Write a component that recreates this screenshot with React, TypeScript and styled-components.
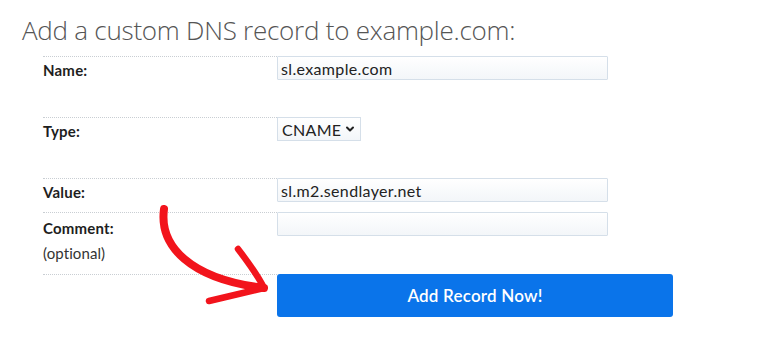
import React from 'react';
import styled, { createGlobalStyle } from 'styled-components';
import { ChevronDown } from 'lucide-react';

const GlobalStyle = createGlobalStyle`
  html, body {
    margin: 0;
    padding: 0;
    background: #fff;
  }
  body {
    font-family: Lato, "Open Sans", Arial, sans-serif;
    color: #222;
  }
`;

const Page = styled.div`
  position: relative;
  width: 768px;
  height: 342px;
  overflow: hidden;
  padding: 14px 0 0 22px;
  box-sizing: border-box;
`;

const Heading = styled.h1`
  margin: 0;
  font-family: "Open Sans", sans-serif;
  font-weight: 300;
  font-size: 26px;
  line-height: 32px;
  letter-spacing: -0.25px;
  color: #555;
`;

const Form = styled.div`
  margin: 10px 0 0 21px;
  display: flex;
  flex-direction: column;
`;

const Row = styled.div<{ $h: number }>`
  display: grid;
  grid-template-columns: 234px auto;
  height: ${(p) => p.$h}px;
`;

const LabelCell = styled.div<{ $pad?: number }>`
  border-top: 1px dotted #c9ced3;
  padding-top: ${(p) => p.$pad ?? 5}px;
  display: flex;
  flex-direction: column;
  gap: 9px;
`;

const Label = styled.span`
  font-weight: 700;
  font-size: 15px;
  line-height: 16px;
  letter-spacing: 0.2px;
  color: #1e1e1e;
`;

const Hint = styled.span`
  font-size: 15px;
  line-height: 16px;
  letter-spacing: 0.1px;
  color: #333;
`;

const FieldCell = styled.div`
  display: flex;
  align-items: flex-start;
`;

const TextInput = styled.input`
  width: 331px;
  height: 24px;
  box-sizing: border-box;
  border: 1px solid #d5dfe9;
  border-radius: 1px;
  background: linear-gradient(#ffffff, #f3f6f9);
  font-family: Lato, sans-serif;
  font-size: 16px;
  letter-spacing: 0.35px;
  color: #222;
  padding: 0 3px;
  outline: none;
`;

const SelectBox = styled.div`
  height: 24px;
  box-sizing: border-box;
  border: 1px solid #d5dfe9;
  background: linear-gradient(#ffffff, #f3f6f9);
  display: flex;
  align-items: center;
  gap: 3px;
  padding: 0 4px 0 4px;
  font-size: 16px;
  letter-spacing: 0.3px;
  color: #222;
`;

const Button = styled.button`
  width: 396px;
  height: 43px;
  border: none;
  border-radius: 3px;
  background: #0a74ea;
  color: #fff;
  font-family: Lato, sans-serif;
  font-size: 17px;
  font-weight: 600;
  letter-spacing: 0.2px;
  cursor: pointer;
`;

const ArrowLayer = styled.svg`
  position: absolute;
  left: 0;
  top: 0;
  pointer-events: none;
`;

export default function App() {
  return (
    <>
      <GlobalStyle />
      <Page>
        <Heading>Add a custom DNS record to example.com:</Heading>
        <Form>
          <Row $h={61}>
            <LabelCell>
              <Label>Name:</Label>
            </LabelCell>
            <FieldCell>
              <TextInput readOnly value="sl.example.com" />
            </FieldCell>
          </Row>
          <Row $h={61}>
            <LabelCell>
              <Label>Type:</Label>
            </LabelCell>
            <FieldCell>
              <SelectBox>
                CNAME
                <ChevronDown size={12} strokeWidth={4} />
              </SelectBox>
            </FieldCell>
          </Row>
          <Row $h={34}>
            <LabelCell>
              <Label>Value:</Label>
            </LabelCell>
            <FieldCell>
              <TextInput readOnly value="sl.m2.sendlayer.net" />
            </FieldCell>
          </Row>
          <Row $h={62}>
            <LabelCell $pad={7}>
              <Label>Comment:</Label>
              <Hint>(optional)</Hint>
            </LabelCell>
            <FieldCell>
              <TextInput readOnly value="" />
            </FieldCell>
          </Row>
          <Row $h={50}>
            <LabelCell />
            <FieldCell>
              <Button>Add Record Now!</Button>
            </FieldCell>
          </Row>
        </Form>
        <ArrowLayer width="768" height="342" viewBox="0 0 768 342">
          <g fill="none" stroke="#f2141c" strokeLinecap="round" strokeLinejoin="round">
            <path d="M164 209 C 159 246, 190 279, 264 288" strokeWidth="8" />
            <path d="M238 249 C 248 262, 258 276, 264 288 L 209 301" strokeWidth="6.5" />
          </g>
        </ArrowLayer>
      </Page>
    </>
  );
}
